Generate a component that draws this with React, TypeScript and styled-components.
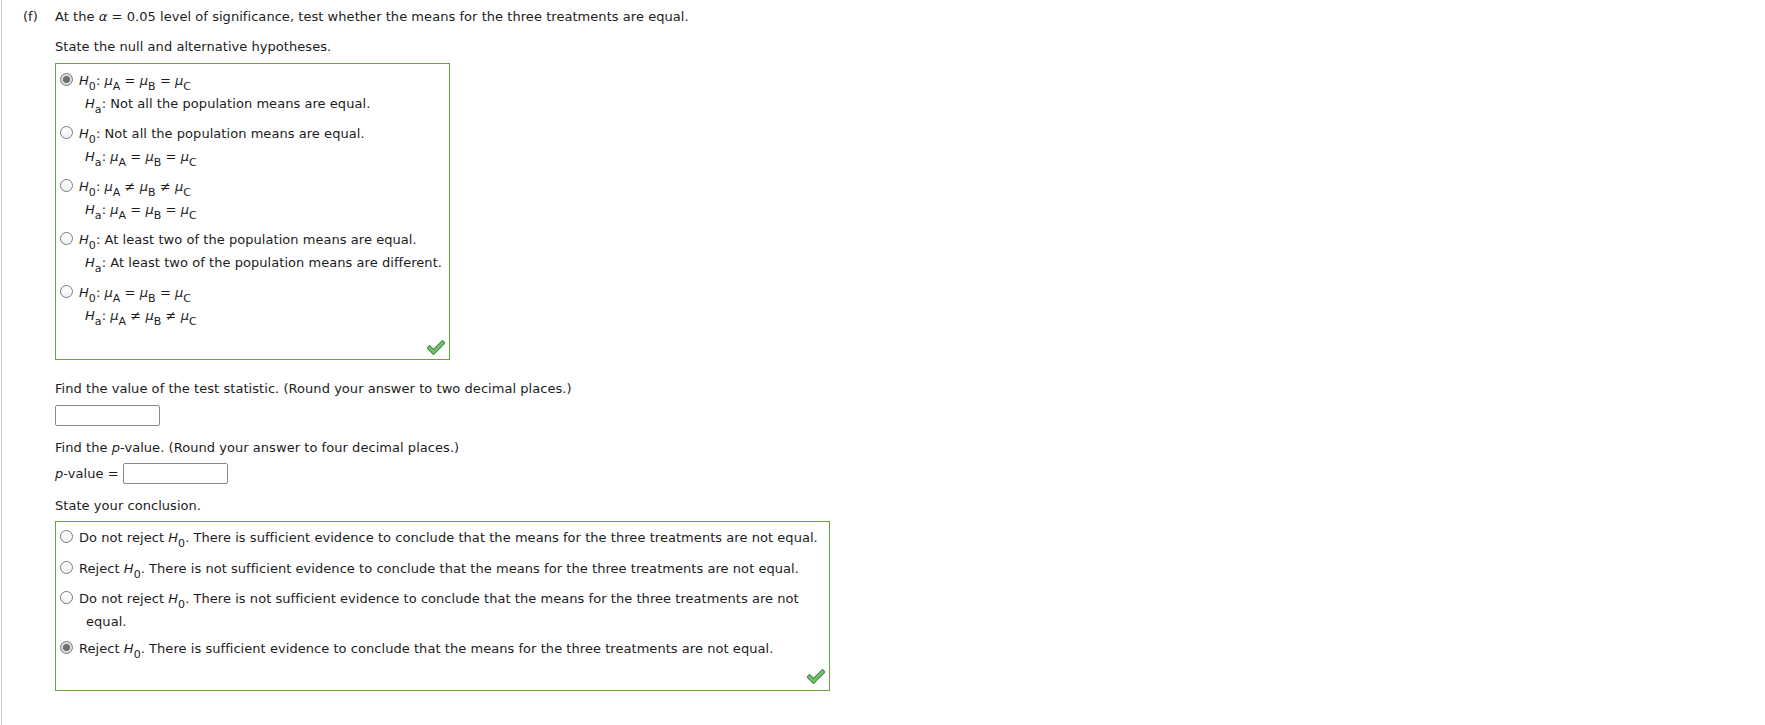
import React, { FunctionComponent, ReactNode } from 'react';
import styled, { createGlobalStyle } from 'styled-components';

const GlobalStyle = createGlobalStyle`
  html, body {
    margin: 0;
    padding: 0;
    background: #ffffff;
  }
  body {
    font-family: "DejaVu Sans", Verdana, sans-serif;
    font-size: 13px;
    letter-spacing: 0.05px;
    color: #1c1c1c;
  }
`;

const Page = styled.div`
  box-sizing: border-box;
  min-height: 725px;
  margin-left: 1px;
  border-left: 1px solid #d4d4d4;
  padding: 7px 0 0 21px;
  display: flex;
`;

const PartLabel = styled.div`
  width: 32px;
  line-height: 20px;
  flex: none;
`;

const Content = styled.div`
  display: flex;
  flex-direction: column;
  align-items: flex-start;
`;

const Para = styled.div<{ $top?: number }>`
  line-height: 20px;
  margin-top: ${(p) => p.$top ?? 0}px;
  white-space: nowrap;
`;

const AnswerBox = styled.div<{ $width: number; $top: number; $padTop: number; $padBottom: number }>`
  box-sizing: border-box;
  width: ${(p) => p.$width}px;
  margin-top: ${(p) => p.$top}px;
  border: 1px solid #68a03c;
  padding: ${(p) => `${p.$padTop}px 3px ${p.$padBottom}px 4px`};
  display: flex;
  flex-direction: column;
`;

const OptionList = styled.div<{ $gap: number }>`
  display: flex;
  flex-direction: column;
  gap: ${(p) => p.$gap}px;
`;

const Option = styled.div`
  display: grid;
  grid-template-columns: 19px 1fr;
  align-items: start;
`;

const Radio = styled.span<{ $checked?: boolean; $top: number }>`
  box-sizing: border-box;
  display: block;
  width: 13px;
  height: 13px;
  margin-top: ${(p) => p.$top}px;
  border-radius: 50%;
  border: 1px solid #7a7a7a;
  background: ${(p) =>
    p.$checked
      ? 'radial-gradient(circle, #6f6f6f 0 3.3px, #dcdcdc 3.8px 100%)'
      : 'linear-gradient(#ffffff, #f1f1f1)'};
`;

const Lines = styled.div`
  display: flex;
  flex-direction: column;
`;

const Line = styled.div<{ $indent?: number; $lh: number }>`
  line-height: ${(p) => p.$lh}px;
  padding-left: ${(p) => p.$indent ?? 0}px;
  white-space: nowrap;
`;

const I = styled.i`
  font-style: italic;
`;

const Sub = styled.span`
  font-size: 11px;
  line-height: 0;
  vertical-align: -5px;
`;

const CheckRow = styled.div<{ $top: number }>`
  display: flex;
  justify-content: flex-end;
  align-items: center;
  height: 22px;
  margin-top: ${(p) => p.$top}px;
  padding-right: 1px;
`;

const Field = styled.span`
  box-sizing: border-box;
  display: inline-block;
  width: 105px;
  height: 21px;
  border: 1px solid #8a8a8a;
  border-radius: 2px;
  background: #fff;
  vertical-align: middle;
`;

const FieldRow = styled.div<{ $top: number }>`
  display: flex;
  align-items: center;
  gap: 4px;
  height: 21px;
  margin-top: ${(p) => p.$top}px;
  white-space: nowrap;
`;

const CheckMark: FunctionComponent = () => (
  <svg width="18" height="15" viewBox="0 0 18 15">
    <polyline
      points="2.5,8 6.5,12 15.5,3"
      fill="none"
      stroke="#3f8a3f"
      strokeWidth="4.6"
      strokeLinecap="square"
      strokeLinejoin="miter"
    />
    <polyline
      points="2.5,8 6.5,12 15.5,3"
      fill="none"
      stroke="#72c272"
      strokeWidth="2.6"
      strokeLinecap="square"
      strokeLinejoin="miter"
    />
  </svg>
);

const H = ({ s }: { s: string }) => (
  <>
    <I>H</I>
    <Sub>{s}</Sub>
  </>
);

const Mu = ({ s }: { s: string }) => (
  <>
    <I>μ</I>
    <Sub>{s}</Sub>
  </>
);

const chain = (op: string) => (
  <>
    <Mu s="A" /> {op} <Mu s="B" /> {op} <Mu s="C" />
  </>
);

interface Choice {
  lines: ReactNode[];
  checked?: boolean;
}

const hypotheses: Choice[] = [
  {
    checked: true,
    lines: [
      <>
        <H s="0" />: {chain('=')}
      </>,
      <>
        <H s="a" />: Not all the population means are equal.
      </>,
    ],
  },
  {
    lines: [
      <>
        <H s="0" />: Not all the population means are equal.
      </>,
      <>
        <H s="a" />: {chain('=')}
      </>,
    ],
  },
  {
    lines: [
      <>
        <H s="0" />: {chain('≠')}
      </>,
      <>
        <H s="a" />: {chain('=')}
      </>,
    ],
  },
  {
    lines: [
      <>
        <H s="0" />: At least two of the population means are equal.
      </>,
      <>
        <H s="a" />: At least two of the population means are different.
      </>,
    ],
  },
  {
    lines: [
      <>
        <H s="0" />: {chain('=')}
      </>,
      <>
        <H s="a" />: {chain('≠')}
      </>,
    ],
  },
];

const conclusions: Choice[] = [
  {
    lines: [
      <>
        Do not reject <H s="0" />. There is sufficient evidence to conclude that the means for the three
        treatments are not equal.
      </>,
    ],
  },
  {
    lines: [
      <>
        Reject <H s="0" />. There is not sufficient evidence to conclude that the means for the three treatments
        are not equal.
      </>,
    ],
  },
  {
    lines: [
      <>
        Do not reject <H s="0" />. There is not sufficient evidence to conclude that the means for the three
        treatments are not
      </>,
      <>equal.</>,
    ],
  },
  {
    checked: true,
    lines: [
      <>
        Reject <H s="0" />. There is sufficient evidence to conclude that the means for the three treatments are
        not equal.
      </>,
    ],
  },
];

interface GroupProps {
  choices: Choice[];
  gap: number;
  indent: number;
  // line height of a first line and of a wrapped continuation line
  lh: number;
  contLh: number;
}

const ChoiceGroup: FunctionComponent<GroupProps> = ({ choices, gap, indent, lh, contLh }) => (
  <OptionList $gap={gap}>
    {choices.map((c, i) => (
      <Option key={i}>
        <Radio $checked={c.checked} $top={Math.round(lh / 2 - 7.5)} />
        <Lines>
          {c.lines.map((l, j) => (
            <Line key={j} $indent={j > 0 ? indent : 0} $lh={j > 0 ? contLh : lh}>
              {l}
            </Line>
          ))}
        </Lines>
      </Option>
    ))}
  </OptionList>
);

const App: FunctionComponent = () => {
  return (
    <>
      <GlobalStyle />
      <Page>
        <PartLabel>(f)</PartLabel>
        <Content>
          <Para>
            At the <I>α</I> = 0.05 level of significance, test whether the means for the three treatments are
            equal.
          </Para>
          <Para $top={10}>State the null and alternative hypotheses.</Para>
          <AnswerBox $width={395} $top={6} $padTop={5} $padBottom={1}>
            <ChoiceGroup choices={hypotheses} gap={7} indent={6} lh={23} contLh={23} />
            <CheckRow $top={9}>
              <CheckMark />
            </CheckRow>
          </AnswerBox>

          <Para $top={19}>Find the value of the test statistic. (Round your answer to two decimal places.)</Para>
          <FieldRow $top={6}>
            <Field />
          </FieldRow>

          <Para $top={12}>
            Find the <I>p</I>-value. (Round your answer to four decimal places.)
          </Para>
          <FieldRow $top={5}>
            <span>
              <I>p</I>-value =
            </span>
            <Field />
          </FieldRow>

          <Para $top={12}>State your conclusion.</Para>
          <AnswerBox $width={775} $top={5} $padTop={2} $padBottom={2}>
            <ChoiceGroup choices={conclusions} gap={3.5} indent={7} lh={27} contLh={19} />
            <CheckRow $top={4}>
              <CheckMark />
            </CheckRow>
          </AnswerBox>
        </Content>
      </Page>
    </>
  );
};

export default App;
